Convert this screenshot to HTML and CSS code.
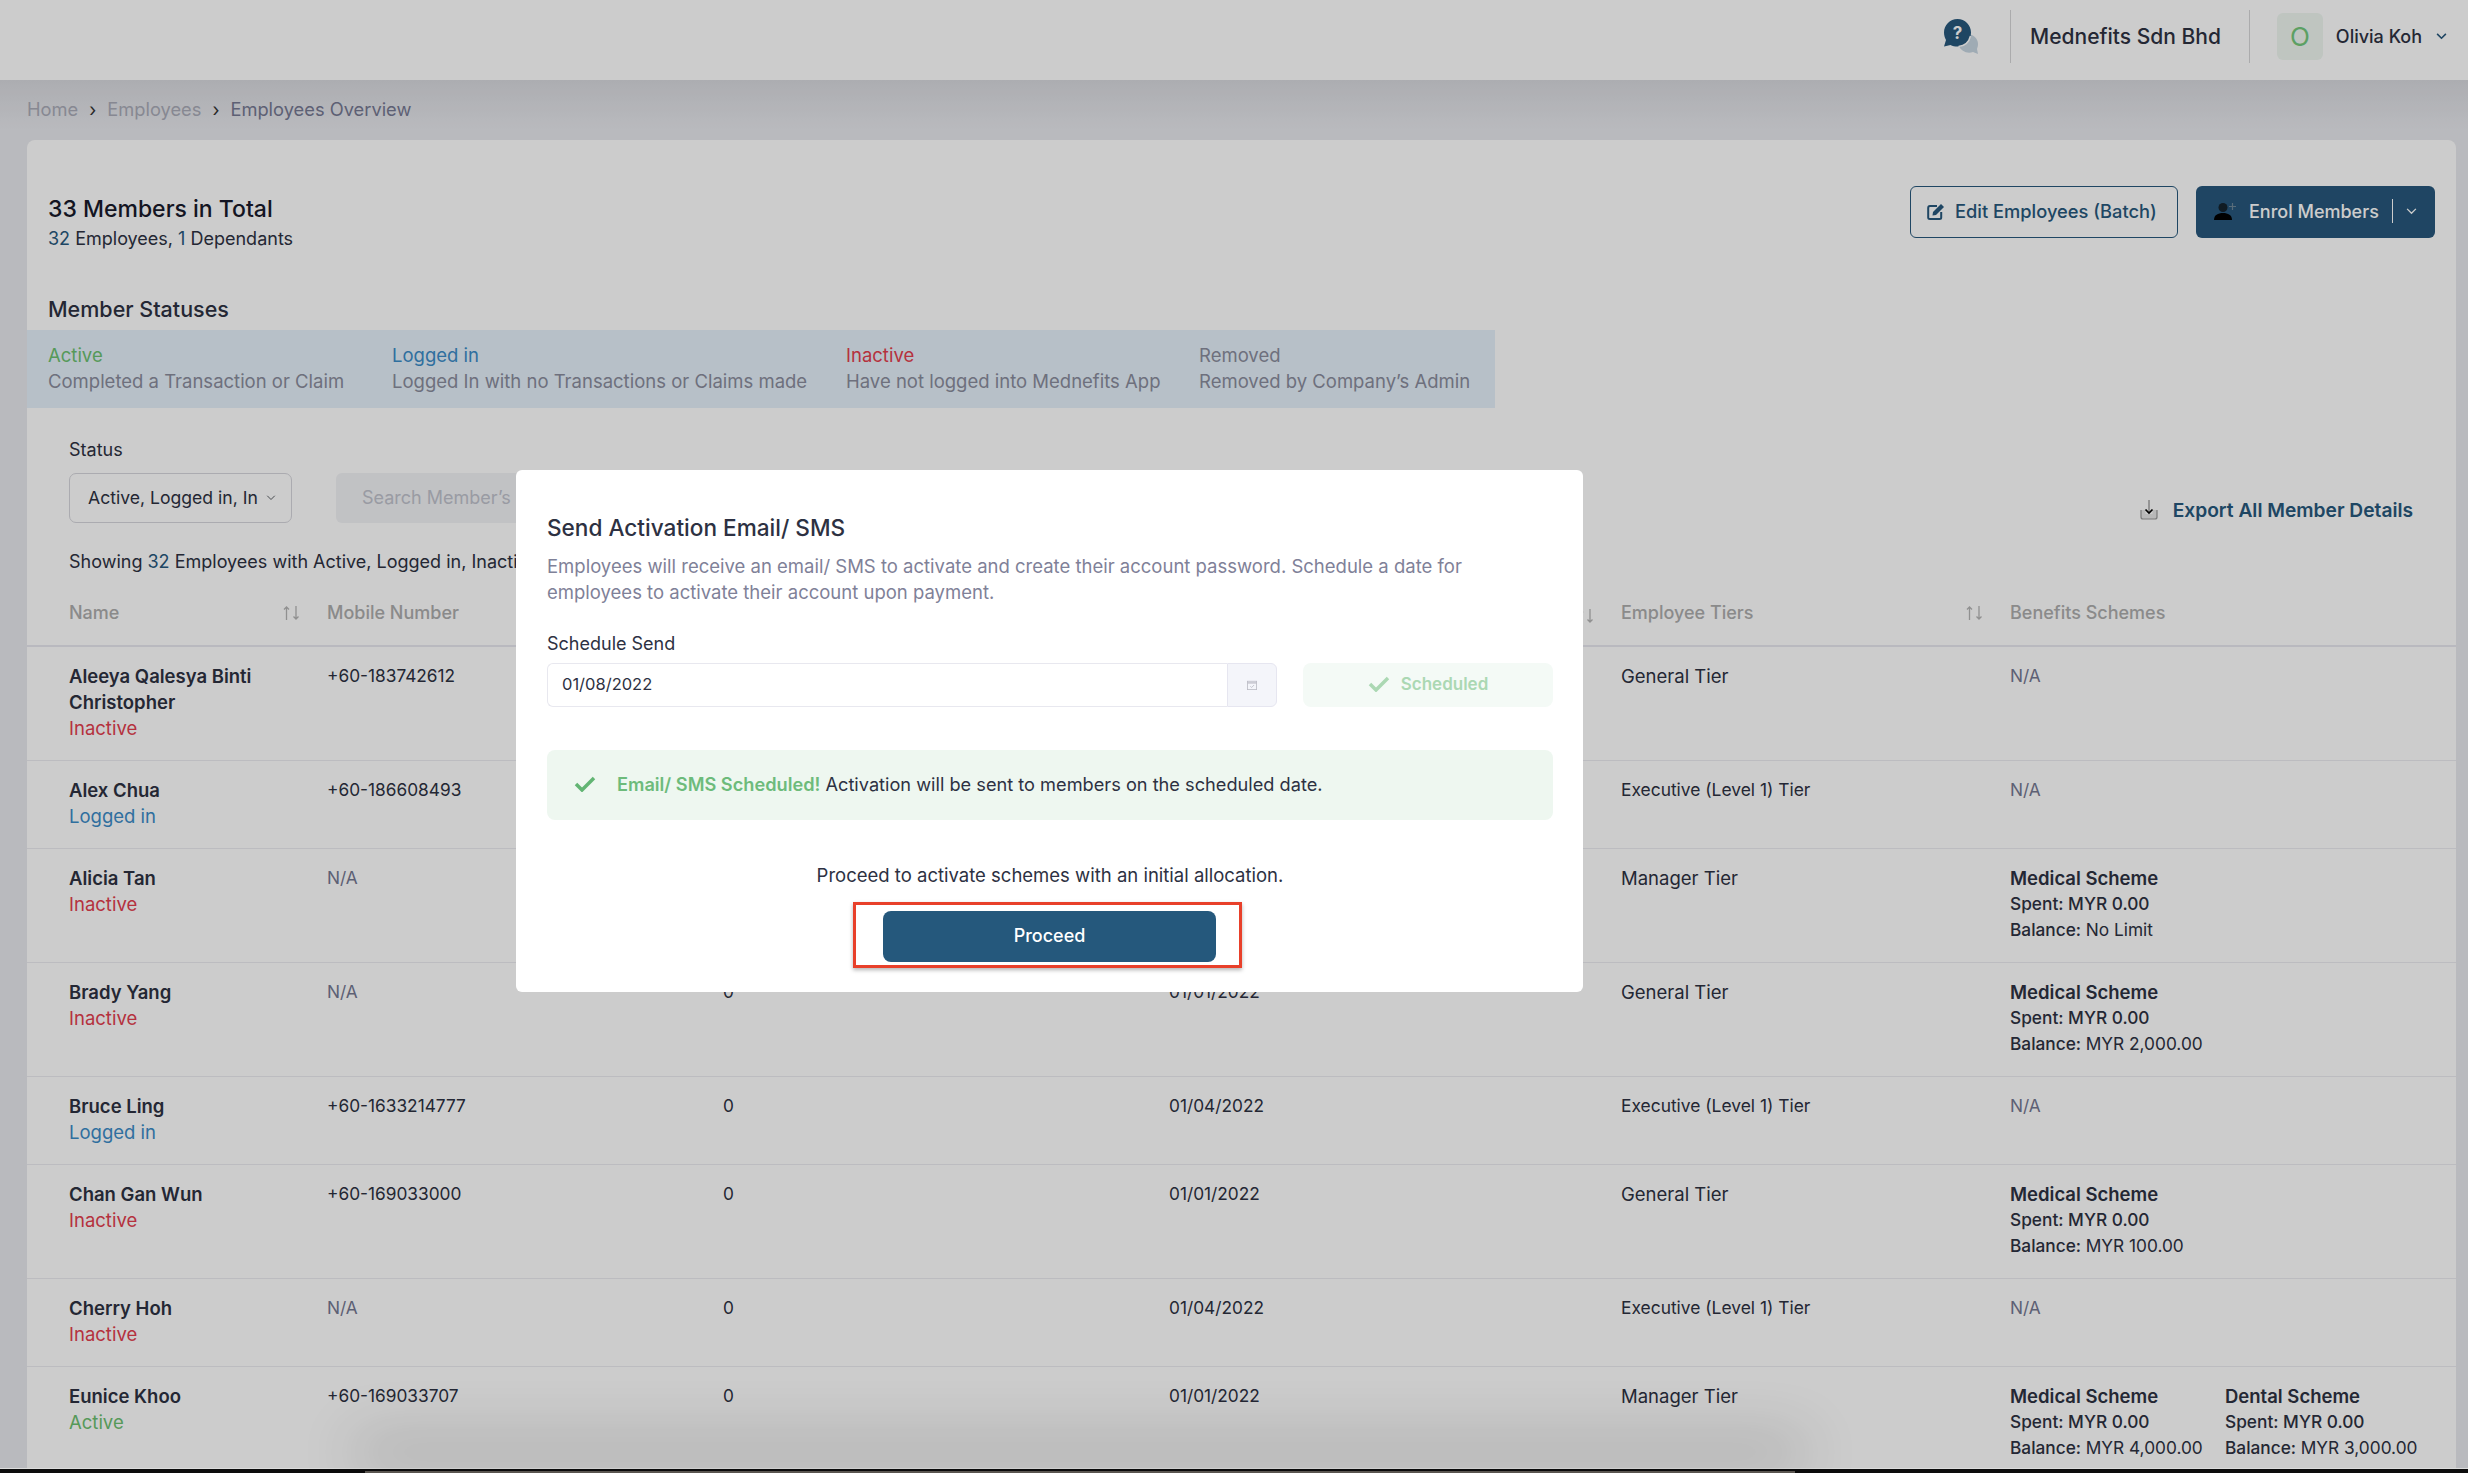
FILE: index.html
```html
<!DOCTYPE html>
<html lang="en">
<head>
    <meta charset="UTF-8">
    <title>Employees Overview</title>
    <link rel="stylesheet" href="styles.css">
</head>
<body>
    <header class="topbar">
        <svg class="help-icon" viewBox="0 0 34 35" width="34" height="35">
            <path d="M22 15c7 0 12 4 12 10 0 2-.5 3.500-1 5l1 5-5-2c-6 2-12-1-14-6z" fill="#c7d6e2"/>
            <path d="M13.500 0C6 0 0 6 0 13.500c0 3 1 5.500 2 7.500l-2 6.500 6.500-1.500c2 1 4.500 1.500 7 1.500C21 27.500 27 21.500 27 13.500 27 6 21 0 13.500 0z" fill="#27587c"/>
            <path d="M26.500 17c-1.500 6-6 10-12 10.500" fill="none" stroke="#fff" stroke-width="1.500"/>
            <text x="13.500" y="19.500" class="help-mark">?</text>
        </svg>
        <span class="topbar-line"></span>
        <span class="company">Mednefits Sdn Bhd</span>
        <span class="topbar-line"></span>
        <span class="avatar">O</span>
        <span class="user">Olivia Koh</span>
        <svg class="chev chev-user" viewBox="0 0 12 8" width="11" height="7"><path d="M1 1l5 5 5-5" fill="none" stroke="#27587c" stroke-width="1.800"/></svg>
    </header>

    <nav class="crumbs">
        <a href="#">Home</a><i>&rsaquo;</i><a href="#">Employees</a><i>&rsaquo;</i><b>Employees Overview</b>
    </nav>

    <main class="card">
        <section class="summary">
            <div>
                <h1>33 Members in Total</h1>
                <p><em>32</em> Employees, <em>1</em> Dependants</p>
            </div>
            <div class="actions">
                <button class="btn-outline">
                    <svg viewBox="0 0 18 17" width="18" height="17"><path d="M10 3H3C2 3 1.200 3.800 1.200 5v9.500c0 1 .8 1.500 1.800 1.500h9.500c1 0 1.700-.5 1.700-1.500V9" fill="none" stroke="#27587c" stroke-width="2"/><path d="M6 9l8-8 3 3-8 8-3.500.5z" fill="#27587c"/></svg>
                    Edit Employees (Batch)
                </button>
                <button class="btn-solid">
                    <svg viewBox="0 0 22 17" width="22" height="17"><circle cx="9" cy="4.500" r="4.500" fill="#14222c"/><path d="M0 17c0-5 4-7 9-7s9 2 9 7z"/><path d="M18.500 0v7M15 3.500h7" stroke="#6f8799" stroke-width="1.200"/></svg>
                    <span class="enrol-text">Enrol Members</span>
                    <span class="btn-split"></span>
                    <svg class="chev" viewBox="0 0 12 8" width="11" height="7"><path d="M1 1l5 5 5-5" fill="none" stroke="#fff" stroke-width="1.500"/></svg>
                </button>
            </div>
        </section>

        <h2>Member Statuses</h2>
        <section class="legend">
            <div><span class="active">Active</span><span>Completed a Transaction or Claim</span></div>
            <div><span class="logged">Logged in</span><span>Logged In with no Transactions or Claims made</span></div>
            <div><span class="inactive">Inactive</span><span>Have not logged into Mednefits App</span></div>
            <div><span class="removed">Removed</span><span>Removed by Company’s Admin</span></div>
        </section>

        <section class="filters">
            <div class="filter-left">
                <label>Status</label>
                <div class="filter-row">
                    <div class="select">Active, Logged in, In
                        <svg viewBox="0 0 12 8" width="10" height="6"><path d="M1 1l5 5 5-5" fill="none" stroke="#55585f" stroke-width="1.300"/></svg>
                    </div>
                    <div class="search">Search Member’s Name</div>
                </div>
            </div>
            <a class="export" href="#">
                <svg viewBox="0 0 18 20" width="18" height="20"><path d="M1 10v7c0 1.200.8 2 2 2h12c1.200 0 2-.8 2-2v-7" fill="#e6e6e6" stroke="#999" stroke-width="1.200"/><path d="M1.500 10h4v4h7v-4h4v-1h-15z" fill="#fff"/><path d="M9 0v12" stroke="#777" stroke-width="1"/><path d="M5.500 9.500l3.500 3.500 3.500-3.500" fill="none" stroke="#000" stroke-width="1.700"/></svg>
                Export All Member Details
            </a>
        </section>

        <p class="showing">Showing <em>32</em> Employees with Active, Logged in, Inactive</p>

        <table class="members">
            <colgroup>
                <col class="c-name"><col class="c-mobile"><col class="c-dep"><col class="c-date"><col class="c-tier"><col class="c-scheme">
            </colgroup>
            <thead>
                <tr>
                    <th>Name<svg class="sort" viewBox="0 0 17 14" width="17" height="14"><use href="#sort-arrows"/></svg></th>
                    <th>Mobile Number</th>
                    <th></th>
                    <th><svg class="sort" viewBox="0 0 17 14" width="17" height="14"><use href="#sort-arrows"/></svg></th>
                    <th>Employee Tiers<svg class="sort" viewBox="0 0 17 14" width="17" height="14"><use href="#sort-arrows"/></svg></th>
                    <th>Benefits Schemes</th>
                </tr>
            </thead>
            <tbody>
                <tr>
                    <td><b>Aleeya Qalesya Binti<br>Christopher</b><span class="inactive">Inactive</span></td>
                    <td class="num">+60-183742612</td><td></td><td></td><td>General Tier</td><td class="na">N/A</td>
                </tr>
                <tr>
                    <td><b>Alex Chua</b><span class="logged">Logged in</span></td>
                    <td class="num">+60-186608493</td><td></td><td></td><td class="tier-long">Executive (Level 1) Tier</td><td class="na">N/A</td>
                </tr>
                <tr>
                    <td><b>Alicia Tan</b><span class="inactive">Inactive</span></td>
                    <td class="na">N/A</td><td></td><td></td><td>Manager Tier</td>
                    <td><div class="scheme"><b>Medical Scheme</b><b class="lite">Spent: MYR 0.00</b><b class="lite">Balance: <span>No Limit</span></b></div></td>
                </tr>
                <tr>
                    <td><b>Brady Yang</b><span class="inactive">Inactive</span></td>
                    <td class="na">N/A</td><td class="num">0</td><td class="num">01/01/2022</td><td>General Tier</td>
                    <td><div class="scheme"><b>Medical Scheme</b><b class="lite">Spent: MYR 0.00</b><b class="lite">Balance: <span>MYR 2,000.00</span></b></div></td>
                </tr>
                <tr>
                    <td><b>Bruce Ling</b><span class="logged">Logged in</span></td>
                    <td class="num">+60-1633214777</td><td class="num">0</td><td class="num">01/04/2022</td><td class="tier-long">Executive (Level 1) Tier</td><td class="na">N/A</td>
                </tr>
                <tr>
                    <td><b>Chan Gan Wun</b><span class="inactive">Inactive</span></td>
                    <td class="num">+60-169033000</td><td class="num">0</td><td class="num">01/01/2022</td><td>General Tier</td>
                    <td><div class="scheme"><b>Medical Scheme</b><b class="lite">Spent: MYR 0.00</b><b class="lite">Balance: <span>MYR 100.00</span></b></div></td>
                </tr>
                <tr>
                    <td><b>Cherry Hoh</b><span class="inactive">Inactive</span></td>
                    <td class="na">N/A</td><td class="num">0</td><td class="num">01/04/2022</td><td class="tier-long">Executive (Level 1) Tier</td><td class="na">N/A</td>
                </tr>
                <tr>
                    <td><b>Eunice Khoo</b><span class="active">Active</span></td>
                    <td class="num">+60-169033707</td><td class="num">0</td><td class="num">01/01/2022</td><td>Manager Tier</td>
                    <td class="two-schemes">
                        <div class="scheme"><b>Medical Scheme</b><b class="lite">Spent: MYR 0.00</b><b class="lite">Balance: <span>MYR 4,000.00</span></b></div>
                        <div class="scheme"><b>Dental Scheme</b><b class="lite">Spent: MYR 0.00</b><b class="lite">Balance: <span>MYR 3,000.00</span></b></div>
                    </td>
                </tr>
            </tbody>
        </table>
    </main>

    <svg class="defs" width="0" height="0">
        <symbol id="sort-arrows" viewBox="0 0 17 14">
            <path d="M3.500 14V1M1 3.500L3.500 1 6 3.500" fill="none" stroke="#b5b5b5" stroke-width="1.300"/>
            <path d="M13 0v13M10.500 10.500L13 13l2.500-2.500" fill="none" stroke="#b5b5b5" stroke-width="1.300"/>
        </symbol>
    </svg>

    <div class="backdrop"></div>

    <div class="modal">
        <h3>Send Activation Email/ SMS</h3>
        <p class="modal-desc">Employees will receive an email/ SMS to activate and create their account password. Schedule a date for employees to activate their account upon payment.</p>
        <label>Schedule Send</label>
        <div class="schedule-row">
            <div class="date-input">01/08/2022</div>
            <div class="date-addon">
                <svg viewBox="0 0 12 12" width="10" height="10"><rect x=".5" y="1.500" width="11" height="10" fill="none" stroke="#bcbcc6"/><path d="M.5 3.500h11" stroke="#bcbcc6" stroke-width="1.500"/><path d="M4 7.500l1.500 1.500 3-3" fill="none" stroke="#bcbcc6"/></svg>
            </div>
            <div class="scheduled">
                <svg viewBox="0 0 22 16" width="22" height="16"><path d="M2 8l6 6L20 2" fill="none" stroke="#abd8b3" stroke-width="3.500"/></svg>
                Scheduled
            </div>
        </div>
        <div class="notice">
            <svg viewBox="0 0 22 16" width="22" height="16"><path d="M2 8l6 6L20 2" fill="none" stroke="#62b573" stroke-width="3.500"/></svg>
            <p><strong>Email/ SMS Scheduled!</strong> Activation will be sent to members on the scheduled date.</p>
        </div>
        <p class="modal-note">Proceed to activate schemes with an initial allocation.</p>
        <div class="proceed-wrap">
            <button class="proceed">Proceed</button>
        </div>
    </div>

    <div class="bottom-strip"><span></span></div>
</body>
</html>
```

FILE: styles.css
```css
* {
    margin: 0;
    padding: 0;
    box-sizing: border-box;
    font-family: 'Inter', 'Liberation Sans', sans-serif;
}

html,
body {
    height: 1473px;
    overflow: hidden;
}

body {
    position: relative;
    background: linear-gradient(180deg, #d8d9de 80px, #e8e9ee 130px);
    font-size: 18.5px;
    line-height: 26px;
    color: #2d3142;
}

button {
    border: none;
    background: none;
    cursor: pointer;
}

em {
    font-style: normal;
    color: #27587c;
}

.defs {
    position: absolute;
}

/* top bar */
.topbar {
    display: flex;
    align-items: center;
    justify-content: flex-end;
    height: 80px;
    padding: 0 21px 7px 0;
    background: #fff;
}

.help-icon {
    margin-right: 32px;
}

.help-mark {
    font-size: 17px;
    font-weight: 700;
    fill: #fff;
    text-anchor: middle;
}

.topbar-line {
    width: 1px;
    height: 53px;
    background: #d6d6d8;
}

.company {
    margin: 0 28px 0 19px;
    font-size: 21px;
    font-weight: 500;
}

.avatar {
    display: flex;
    align-items: center;
    justify-content: center;
    width: 46px;
    height: 47px;
    margin-left: 27px;
    background: #eff7f1;
    border-radius: 6px;
    font-size: 26px;
    color: #74c97c;
}

.user {
    margin-left: 13px;
    font-size: 18px;
    font-weight: 500;
}

.chev-user {
    margin-left: 14px;
}

/* breadcrumb */
.crumbs {
    display: flex;
    align-items: center;
    gap: 11px;
    height: 60px;
    padding: 0 0 2px 27px;
    font-size: 18.300px;
}

.crumbs a {
    color: #a9abb7;
    text-decoration: none;
}

.crumbs b {
    font-weight: 400;
    color: #757892;
}

.crumbs i {
    font-style: normal;
    color: #333;
}

/* card */
.card {
    width: 2429px;
    margin-left: 27px;
    background: #fff;
    border-radius: 8px 8px 0 0;
}

.summary {
    display: flex;
    justify-content: space-between;
    height: 154px;
    padding: 46px 21px 0;
}

.summary h1 {
    margin-top: 8px;
    font-size: 23px;
    font-weight: 500;
    line-height: 30px;
    color: #181a2b;
}

.summary p {
    margin-top: 2px;
    font-size: 18px;
}

.actions {
    display: flex;
    gap: 18px;
}

.actions button {
    display: flex;
    align-items: center;
    height: 52px;
    padding-bottom: 2px;
    border-radius: 6px;
    font-weight: 500;
}

.btn-outline {
    gap: 10px;
    width: 268px;
    padding-left: 16px;
    border: 1.500px solid #27587c;
    color: #27587c;
    font-size: 18.300px;
}

.btn-solid {
    width: 239px;
    padding: 0 18px;
    background: #27577c;
    color: #fff;
    font-size: 18px;
}

.enrol-text {
    margin-left: 13px;
    white-space: nowrap;
}

.btn-split {
    flex: none;
    width: 1px;
    height: 24px;
    margin: 0 13px 0 auto;
    background: #fff;
}

.card h2 {
    padding-left: 21px;
    font-size: 21.500px;
    font-weight: 500;
    line-height: 30px;
    margin-bottom: 6px;
}

.legend {
    display: grid;
    grid-template-columns: 344px 454px 353px 1fr;
    align-items: center;
    width: 1468px;
    height: 78px;
    padding: 0 0 3px 21px;
    background: #e5f1fa;
    color: #8a8c9d;
    white-space: nowrap;
}

.legend span {
    display: block;
}

.active {
    color: #6cc070;
}

.logged {
    color: #3b8bc7;
}

.inactive {
    color: #e33e4e;
}

.legend .removed {
    color: #8a8c9d;
}

.filters {
    display: flex;
    justify-content: space-between;
    height: 141px;
    padding: 28px 43px 0 42px;
}

.filter-left label {
    display: block;
    font-size: 18px;
    line-height: 28px;
}

.filter-row {
    display: flex;
    gap: 44px;
    margin-top: 9px;
}

.select {
    display: flex;
    align-items: center;
    justify-content: space-between;
    width: 223px;
    height: 50px;
    padding: 0 15px 0 18px;
    border: 1px solid #d6d6dc;
    border-radius: 7px;
    font-size: 17.600px;
    white-space: nowrap;
}

.search {
    width: 500px;
    height: 50px;
    padding: 12px 0 0 26px;
    background: #f2f3f6;
    border-radius: 6px;
    color: #c0c2cc;
    font-size: 18px;
    white-space: nowrap;
}

.export {
    display: flex;
    align-items: center;
    gap: 15px;
    height: 28px;
    margin-top: 60px;
    font-size: 19.200px;
    font-weight: 600;
    color: #27587c;
    text-decoration: none;
}

.showing {
    padding-left: 42px;
    font-size: 18px;
    white-space: nowrap;
}

/* table */
.members {
    width: 100%;
    margin-top: 11px;
    border-collapse: collapse;
    table-layout: fixed;
}

.c-name { width: 300px; }
.c-mobile { width: 396px; }
.c-dep { width: 446px; }
.c-date { width: 452px; }
.c-tier { width: 389px; }

.members th {
    height: 60px;
    padding-bottom: 5px;
    border-bottom: 2px solid #e8e8ef;
    font-size: 18px;
    font-weight: 500;
    text-align: left;
    color: #adadad;
}

.members th:first-child,
.members td:first-child {
    padding-left: 42px;
}

.sort {
    float: right;
    margin: 6px 27px 0 0;
}

.members td {
    padding: 15.500px 0 19.500px;
    border-bottom: 1px solid #ececf1;
    vertical-align: top;
}

.members td b {
    display: block;
    font-weight: 600;
}

.members td > span {
    display: block;
}

.members .num {
    font-size: 17.300px;
}

.members .tier-long {
    font-size: 17.400px;
}

.na {
    color: #757892;
    font-size: 17.300px;
}

.scheme b.lite {
    font-size: 17.300px;
    font-weight: 500;
}

.scheme b.lite span {
    font-weight: 400;
}

.two-schemes {
    display: grid;
    grid-template-columns: 215px 1fr;
}

/* dim layer and dialog */
.backdrop {
    position: absolute;
    inset: 0;
    background: rgba(0, 0, 0, .2);
}

.modal {
    position: absolute;
    left: 516px;
    top: 470px;
    width: 1067px;
    height: 522px;
    padding: 42px 30px 0 31px;
    background: #fff;
    border-radius: 6px;
}

.modal h3 {
    font-size: 22.600px;
    font-weight: 500;
    line-height: 32px;
}

.modal-desc {
    width: 925px;
    margin-top: 9px;
    color: #7f8198;
}

.modal label {
    display: block;
    margin-top: 26px;
    font-size: 18px;
}

.schedule-row {
    display: flex;
    height: 44px;
    margin-top: 6px;
}

.date-input {
    width: 680px;
    padding: 7px 14px;
    border: 1.500px solid #e8e8ef;
    border-right: none;
    border-radius: 6px 0 0 6px;
    font-size: 16.500px;
}

.date-addon {
    display: flex;
    align-items: center;
    justify-content: center;
    width: 50px;
    background: #f4f5fa;
    border: 1.500px solid #e6e6f0;
    border-radius: 0 6px 6px 0;
}

.scheduled {
    display: flex;
    align-items: center;
    justify-content: center;
    gap: 11px;
    width: 250px;
    margin-left: 26px;
    padding-bottom: 2px;
    background: #f4faf6;
    border-radius: 8px;
    color: #abd8b3;
    font-size: 17px;
    font-weight: 600;
}

.notice {
    display: flex;
    align-items: center;
    gap: 21px;
    height: 70px;
    margin-top: 43px;
    padding: 0 27px 2px;
    background: #eef7f0;
    border-radius: 8px;
    font-size: 18.200px;
}

.notice strong {
    font-weight: 600;
    color: #6dbb7b;
}

.modal-note {
    margin-top: 42px;
    text-align: center;
}

.proceed-wrap {
    width: 389px;
    height: 66px;
    margin: 14px 0 0 306px;
    padding: 6px 0 0 27px;
    border: 3px solid #e8402a;
    box-shadow: 0 2px 4px rgba(0, 0, 0, .3);
}

.proceed {
    width: 333px;
    height: 51px;
    padding-bottom: 2px;
    background: #25587c;
    border-radius: 8px;
    color: #fff;
    font-size: 18px;
    font-weight: 500;
}

/* window edge at the bottom of the capture */
.bottom-strip {
    position: absolute;
    left: 0;
    right: 0;
    bottom: 0;
    height: 5px;
    background: #0c0c0c;
    border-top: 1.500px solid #dcdcdc;
}

.bottom-strip span {
    display: block;
    width: 1430px;
    height: 2px;
    margin: 1.500px 0 0 365px;
    background: #5a5650;
    box-shadow: 0 -20px 60px 10px rgba(0, 0, 0, .24);
}
```
